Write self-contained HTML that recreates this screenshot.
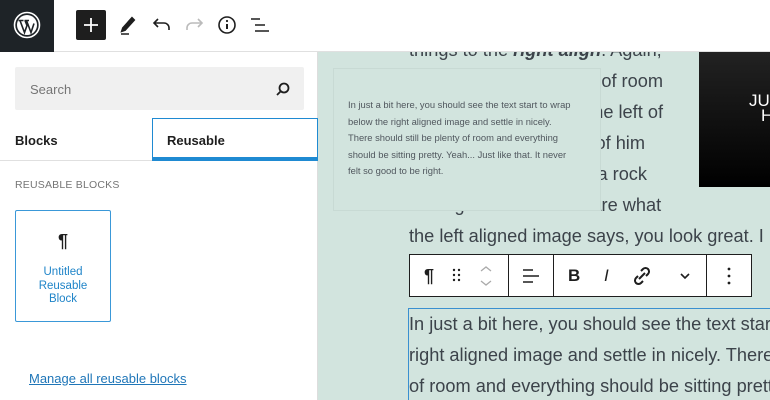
<!DOCTYPE html>
<html><head><style>
*{margin:0;padding:0;box-sizing:border-box}
html,body{width:770px;height:400px;overflow:hidden}
body{position:relative;font-family:"Liberation Sans",sans-serif;background:#d2e4de}
.hdr{position:absolute;left:0;top:0;width:770px;height:52px;background:#fff;border-bottom:1px solid #e0e0e0}
.logo{position:absolute;left:0;top:0;width:54px;height:52px;background:#1e2327}
.side{position:absolute;left:0;top:52px;width:318px;height:348px;background:#fff;border-right:1px solid #ddd}
.mt{position:absolute;left:409px;font-size:18.2px;color:#3c434a;white-space:nowrap;line-height:20px}
.mr{position:absolute;font-size:18.2px;color:#3c434a;white-space:nowrap;line-height:20px}
.pop{position:absolute;left:333px;top:68px;width:268px;height:143px;background:#d2e4de;border:1px solid #c8dad4;padding:28px 14px 0 14px;font-size:9.4px;line-height:16.5px;color:#50575e;white-space:nowrap}
.ic{position:absolute}
</style></head><body>
<div class="mt" style="top:40px">things to the <b><i>right align</i></b>. Again,</div>
<div class="mr" style="top:71px;right:107px">plenty of room</div>
<div class="mr" style="top:102px;right:107px">on the left of</div>
<div class="mr" style="top:133px;right:125px">of him</div>
<div class="mr" style="top:164px;right:123px">a rock</div>
<div class="mt" style="top:195px">that right side. I don't care what</div>
<div class="mt" style="top:226px">the left aligned image says, you look great. I</div>
<div style="position:absolute;left:699px;top:52px;width:71px;height:135px;background:linear-gradient(#222,#000);color:#fff;font-size:17px;line-height:15px;padding-top:41px;padding-left:50px">JU<br><span style="padding-left:12px">H</span></div>
<div class="pop">In just a bit here, you should see the text start to wrap<br>below the right aligned image and settle in nicely.<br>There should still be plenty of room and everything<br>should be sitting pretty. Yeah... Just like that. It never<br>felt so good to be right.</div>
<div style="position:absolute;left:409px;top:254px;width:343px;height:43px;background:#fff;border:1px solid #1e1e1e">
<div style="position:absolute;left:98px;top:0;width:1px;height:41px;background:#1e1e1e"></div>
<div style="position:absolute;left:143px;top:0;width:1px;height:41px;background:#1e1e1e"></div>
<div style="position:absolute;left:296px;top:0;width:1px;height:41px;background:#1e1e1e"></div>
<span style="position:absolute;left:14px;top:11px;font-size:18px;font-weight:bold;color:#1e1e1e">¶</span>
<svg class="ic" style="left:42px;top:13px" width="10" height="16"><g fill="#1e1e1e"><circle cx="2" cy="2" r="1.2"/><circle cx="7" cy="2" r="1.2"/><circle cx="2" cy="7" r="1.2"/><circle cx="7" cy="7" r="1.2"/><circle cx="2" cy="12" r="1.2"/><circle cx="7" cy="12" r="1.2"/></g></svg>
<svg class="ic" style="left:69px;top:9px" width="14" height="24" fill="none" stroke="#aaa" stroke-width="1.3"><path d="M2 7l5-4 5 4M2 17l5 4 5-4"/></svg>
<svg class="ic" style="left:112px;top:12px" width="18" height="18" stroke="#1e1e1e" stroke-width="1.5"><path d="M1 3h10M1 9h16M1 15h10"/></svg>
<span style="position:absolute;left:158px;top:11px;font-size:17px;font-weight:bold;color:#1e1e1e">B</span>
<span style="position:absolute;left:194px;top:11px;font-size:17px;font-style:italic;color:#1e1e1e">I</span>
<svg class="ic" style="left:222px;top:11px" width="20" height="20" fill="none" stroke="#1e1e1e" stroke-width="2"><path d="M9 5l2-2a3.5 3.5 0 015 5l-2 2M11 15l-2 2a3.5 3.5 0 01-5-5l2-2M7 13l6-6"/></svg>
<svg class="ic" style="left:269px;top:17px" width="12" height="8" fill="none" stroke="#1e1e1e" stroke-width="1.6"><path d="M2 2l4 4 4-4"/></svg>
<svg class="ic" style="left:317px;top:12px" width="4" height="18" fill="#1e1e1e"><circle cx="2" cy="2" r="1.4"/><circle cx="2" cy="9" r="1.4"/><circle cx="2" cy="16" r="1.4"/></svg>
</div>
<div style="position:absolute;left:408px;top:308px;width:370px;height:100px;border:1px solid #3a8fd0;border-right:none"></div>
<div class="mt" style="top:314px">In just a bit here, you should see the text start to wrap below the</div>
<div class="mt" style="top:345px">right aligned image and settle in nicely. There should still be plenty</div>
<div class="mt" style="top:376px">of room and everything should be sitting pretty. Yeah.</div>
<div class="hdr"></div>
<div class="logo"><svg style="position:absolute;left:13px;top:11px" width="28" height="28" viewBox="0 0 28 28"><circle cx="14" cy="14" r="12.5" fill="none" stroke="#fff" stroke-width="1.6"/><circle cx="14" cy="14" r="10" fill="#fff"/><path d="M5.5 9.5h5M7 9.5l4.5 12 2.5-7-2-5M11.5 9.5h4.5M13.5 9.5l4.5 12 3-9" fill="none" stroke="#1e2327" stroke-width="1.6"/></svg></div>
<div style="position:absolute;left:76px;top:10px;width:30px;height:30px;background:#1e1e1e;border-radius:2px"><svg style="position:absolute;left:7px;top:7px" width="16" height="16" stroke="#fff" stroke-width="1.8"><path d="M8 1v14M1 8h14"/></svg></div>
<svg class="ic" style="left:118px;top:14px" width="20" height="22" fill="none" stroke="#1e1e1e" stroke-width="2"><path d="M5 14l9-10 2 2-9 10-3 1z" fill="#1e1e1e"/><path d="M3 20h8" stroke-width="1.5"/></svg>
<svg class="ic" style="left:152px;top:16px" width="20" height="16" fill="none" stroke="#1e1e1e" stroke-width="1.6"><path d="M6 3L2 7l4 4M2 7h10a5 5 0 015 5v2"/></svg>
<svg class="ic" style="left:185px;top:16px" width="20" height="16" fill="none" stroke="#bbb" stroke-width="1.6"><path d="M13 3l4 4-4 4M17 7H7a5 5 0 00-5 5v2"/></svg>
<svg class="ic" style="left:217px;top:15px" width="20" height="20" fill="none" stroke="#1e1e1e" stroke-width="1.6"><circle cx="10" cy="10" r="8"/><path d="M10 9v5" stroke-width="2"/><circle cx="10" cy="6" r="1.1" fill="#1e1e1e" stroke="none"/></svg>
<svg class="ic" style="left:250px;top:17px" width="20" height="16" stroke="#1e1e1e" stroke-width="1.6"><path d="M1 2h9M5 8h10M5 14h14"/></svg>
<div class="side">
<div style="position:absolute;left:15px;top:15px;width:289px;height:43px;background:#f0f0f0;border-radius:2px"><span style="position:absolute;left:15px;top:15px;font-size:13px;color:#757575">Search</span>
<svg style="position:absolute;left:260px;top:14px" width="16" height="16" fill="none" stroke="#1e1e1e" stroke-width="1.8"><circle cx="9" cy="7" r="4.5"/><path d="M6 10l-4 4"/></svg></div>
<div style="position:absolute;left:0;top:108px;width:318px;height:1px;background:#e0e0e0"></div>
<span style="position:absolute;left:15px;top:81px;font-size:13px;font-weight:bold;color:#1e1e1e">Blocks</span>
<div style="position:absolute;left:152px;top:66px;width:166px;height:43px;border:1.5px solid #1f8ad2;border-bottom:4px solid #1f8ad2"><span style="position:absolute;left:14px;top:14px;font-size:13px;font-weight:bold;color:#1e1e1e">Reusable</span></div>
<span style="position:absolute;left:15px;top:127px;font-size:10.5px;color:#757575;letter-spacing:.2px">REUSABLE BLOCKS</span>
<div style="position:absolute;left:15px;top:158px;width:96px;height:112px;border:1px solid #3a98d8;border-radius:2px;text-align:center">
<div style="margin-top:20px;font-size:18px;font-weight:bold;color:#1e1e1e">¶</div>
<div style="margin-top:14px;font-size:11.5px;line-height:13.7px;color:#1f84c8">Untitled<br>Reusable<br>Block</div></div>
<span style="position:absolute;left:29px;top:319px;font-size:13px;color:#1f76b8;text-decoration:underline">Manage all reusable blocks</span>
</div>
</body></html>
